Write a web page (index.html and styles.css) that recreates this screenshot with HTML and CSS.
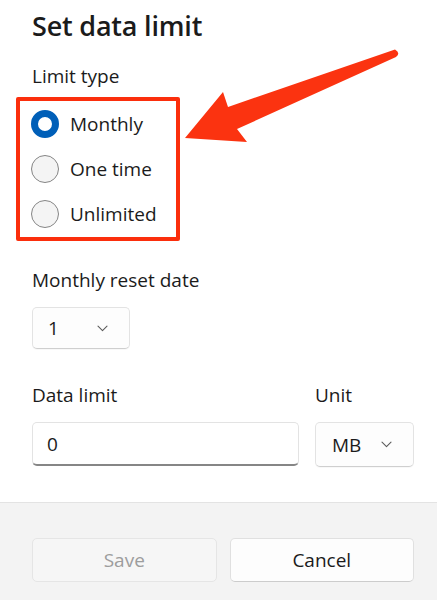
FILE: index.html
```html
<!DOCTYPE html>
<html lang="en">
<head>
<meta charset="utf-8">
<title>Set data limit</title>
<link rel="stylesheet" href="styles.css">
</head>
<body>
<div class="dialog">
  <div class="content">
    <h1 class="title">Set data limit</h1>
    <div class="label">Limit type</div>
    <div class="radio-group">
      <div class="radio checked"><span class="dot"></span><span class="radio-text">Monthly</span></div>
      <div class="radio"><span class="dot"></span><span class="radio-text">One time</span></div>
      <div class="radio"><span class="dot"></span><span class="radio-text">Unlimited</span></div>
    </div>
    <div class="label label-gap">Monthly reset date</div>
    <div class="select select-day">
      <span class="select-value">1</span>
      <svg class="chev" width="11" height="7" viewBox="0 0 11 7"><path d="M1 1.2 L5.5 5.6 L10 1.2" fill="none" stroke="#5c5c5c" stroke-width="1.1" stroke-linecap="round" stroke-linejoin="round"/></svg>
    </div>
    <div class="row">
      <div class="col col-main">
        <div class="label">Data limit</div>
        <div class="input"><span class="input-value">0</span></div>
      </div>
      <div class="col col-unit">
        <div class="label">Unit</div>
        <div class="select select-unit">
          <span class="select-value">MB</span>
          <svg class="chev" width="11" height="7" viewBox="0 0 11 7"><path d="M1 1.2 L5.5 5.6 L10 1.2" fill="none" stroke="#5c5c5c" stroke-width="1.1" stroke-linecap="round" stroke-linejoin="round"/></svg>
        </div>
      </div>
    </div>
  </div>
  <div class="footer">
    <div class="btn btn-disabled">Save</div>
    <div class="btn">Cancel</div>
  </div>
  <svg class="arrow" width="437" height="600" viewBox="0 0 437 600">
    <path d="M185 138 L247 142 L237 129 L396 57 Q401 53 395 49.5 L228 107 L223 92 Z" fill="#fb3310"/>
  </svg>
</div>
</body>
</html>
```

FILE: styles.css
```css
* { box-sizing: border-box; }
html, body { margin: 0; padding: 0; }
body {
  background: #ffffff;
  font-family: "Open Sans", "Noto Sans", sans-serif;
  color: #1b1b1b;
  width: 437px;
  height: 600px;
  overflow: hidden;
}
.dialog {
  position: relative;
  width: 437px;
  height: 600px;
  display: flex;
  flex-direction: column;
}
.content {
  flex: 1;
  padding: 8px 23px 0 32px;
  display: flex;
  flex-direction: column;
  align-items: flex-start;
}
.title {
  margin: 0;
  font-size: 27px;
  font-weight: 600;
  line-height: 36px;
  letter-spacing: -0.2px;
}
.label {
  font-size: 19px;
  line-height: 24px;
  margin-top: 20px;
}
.label-gap { margin-top: 27px; }
.radio-group {
  margin: 9px 0 0 -16px;
  width: 164px;
  border: 4px solid #fb2e0c;
  border-radius: 2px;
  padding: 0 11px 1px;
  display: flex;
  flex-direction: column;
}
.radio {
  height: 45px;
  display: flex;
  align-items: center;
  gap: 11px;
  font-size: 19px;
  line-height: 24px;
}
.dot {
  width: 28px;
  height: 28px;
  border-radius: 50%;
  border: 1px solid #858585;
  background: #f4f4f4;
  flex: none;
}
.radio.checked .dot {
  border: 7px solid #005fb8;
  background: #ffffff;
}
.select {
  margin-top: 15px;
  height: 42px;
  border: 1px solid #e3e3e3;
  border-bottom-color: #cfcfcf;
  border-radius: 5px;
  background: #fdfdfd;
  display: flex;
  align-items: center;
  justify-content: space-between;
  font-size: 19px;
  box-shadow: 0 1px 1px rgba(0,0,0,0.03);
}
.select-day {
  width: 98px;
  padding: 0 21px 0 15px;
}
.select-unit {
  width: 99px;
  height: 45px;
  padding: 0 21px 0 16px;
}
.chev { display: block; }
.row {
  width: 100%;
  display: flex;
  gap: 16px;
  margin-top: 14px;
}
.col { display: flex; flex-direction: column; }
.col-main { flex: 1; }
.col-unit { width: 99px; }
.input {
  margin-top: 15px;
  height: 44px;
  border: 1px solid #e3e3e3;
  border-bottom: 2px solid #868686;
  border-radius: 5px;
  background: #ffffff;
  display: flex;
  align-items: center;
  padding-left: 14px;
  font-size: 19px;
}
.footer {
  height: 98px;
  border-top: 1px solid #e3e3e3;
  background: #f3f3f3;
  padding: 35px 23px 0 32px;
  display: flex;
  gap: 13px;
}
.btn {
  flex: 1;
  height: 44px;
  border: 1px solid #e0e0e0;
  border-bottom-color: #cccccc;
  border-radius: 5px;
  background: #fdfdfd;
  display: flex;
  align-items: center;
  justify-content: center;
  font-size: 19px;
  color: #1b1b1b;
}
.btn-disabled {
  background: #f6f6f6;
  border-color: #e5e5e5;
  color: #9d9d9d;
}
.arrow {
  position: absolute;
  left: 0;
  top: 0;
  pointer-events: none;
}
```
